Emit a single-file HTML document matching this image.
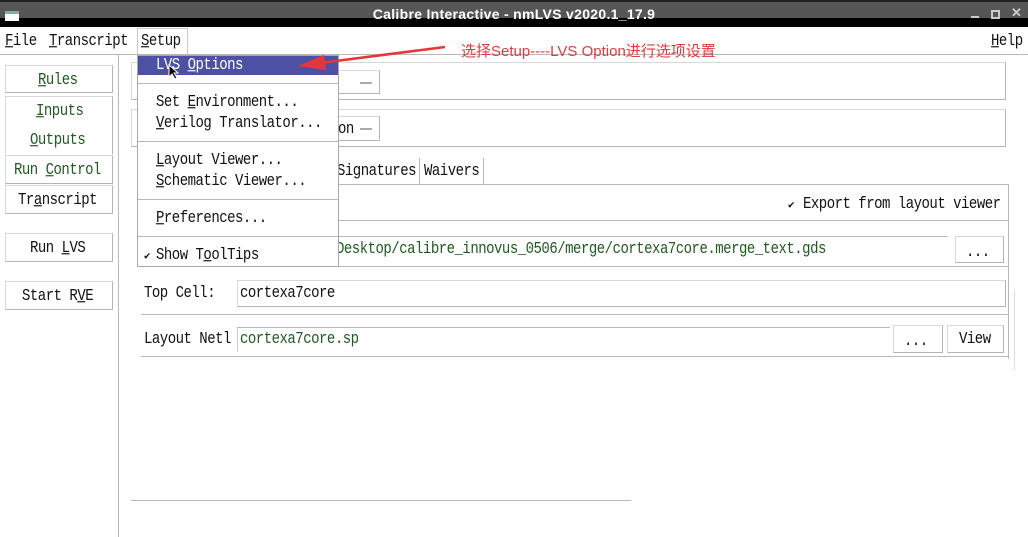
<!DOCTYPE html>
<html><head><meta charset="utf-8"><style>
*{margin:0;padding:0;box-sizing:border-box}
body{width:1028px;height:537px;overflow:hidden;background:#fff;position:relative;font-family:"Liberation Mono",monospace;font-size:14px;letter-spacing:-0.5px;color:#111}
.a{position:absolute;white-space:nowrap}
.t{line-height:16px;transform:scaleY(1.18);transform-origin:0 0}
.b{position:absolute;border:1px solid #b4b4b4;border-left-color:#d8d8d8;border-top-color:#d8d8d8}
.g{color:#1f5a1f}
u{text-decoration:underline}
.hl{position:absolute;height:1px;background:#b8b8b8}
.vl{position:absolute;width:1px;background:#b8b8b8}
</style></head><body>
<div class="a" style="left:0;top:0;width:1028px;height:18px;background:#565656"></div>
<div class="a" style="left:0;top:18px;width:1028px;height:9px;background:#000"></div>
<div class="a" style="left:0;top:0;width:1028px;height:2px;background:#222"></div>
<div class="a" style="left:5px;top:11px;width:14px;height:10px;background:#fff;border-top:3px solid #8aa"></div>
<div class="a" style="left:0;top:6px;width:1028px;text-align:center;color:#fff;font-family:'Liberation Sans',sans-serif;font-weight:bold;font-size:14px;letter-spacing:0.3px">Calibre Interactive - nmLVS v2020.1_17.9</div>
<div class="a" style="left:971px;top:16px;width:8px;height:2px;background:#ccc"></div>
<div class="a" style="left:991px;top:10px;width:9px;height:9px;border:2px solid #ccc"></div>
<div class="a" style="left:1011px;top:5px;color:#ccc;font-family:'Liberation Sans';font-weight:bold;font-size:13px">✕</div>
<div class="a t" style="left:5px;top:32px"><u>F</u>ile</div>
<div class="a t" style="left:49px;top:32px"><u>T</u>ranscript</div>
<div class="a" style="left:137px;top:28px;width:51px;height:27px;border:1px solid #c8c8c8;border-bottom:none"></div>
<div class="a t" style="left:141px;top:32px"><u>S</u>etup</div>
<div class="a t" style="left:991px;top:32px"><u>H</u>elp</div>
<div class="hl" style="left:0;top:54px;width:1028px"></div>
<div class="b" style="left:5px;top:65px;width:108px;height:28px"></div>
<div class="a t g" style="left:38px;top:71px"><u>R</u>ules</div>
<div class="b" style="left:5px;top:96px;width:108px;height:58px;border-bottom:none"></div>
<div class="a t g" style="left:36px;top:102px"><u>I</u>nputs</div>
<div class="a t g" style="left:30px;top:131px"><u>O</u>utputs</div>
<div class="b" style="left:5px;top:155px;width:108px;height:29px"></div>
<div class="a t g" style="left:14px;top:161px">Run <u>C</u>ontrol</div>
<div class="b" style="left:5px;top:185px;width:108px;height:29px"></div>
<div class="a t" style="left:18px;top:191px">Tr<u>a</u>nscript</div>
<div class="b" style="left:5px;top:233px;width:108px;height:29px"></div>
<div class="a t" style="left:30px;top:239px">Run <u>L</u>VS</div>
<div class="b" style="left:5px;top:281px;width:108px;height:29px"></div>
<div class="a t" style="left:22px;top:287px">Start R<u>V</u>E</div>
<div class="vl" style="left:118px;top:55px;height:482px"></div>
<div class="b" style="left:131px;top:62px;width:875px;height:38px"></div>
<div class="b" style="left:300px;top:70px;width:80px;height:24px"></div>
<div class="a" style="left:360px;top:82px;width:12px;height:2px;background:#aaa"></div>
<div class="b" style="left:131px;top:109px;width:875px;height:38px"></div>
<div class="b" style="left:300px;top:116px;width:80px;height:25px"></div>
<div class="a t" style="left:338px;top:120px">on</div>
<div class="a" style="left:360px;top:128px;width:12px;height:2px;background:#aaa"></div>
<div class="a t" style="left:337px;top:162px">Signatures</div>
<div class="vl" style="left:419px;top:158px;height:26px"></div>
<div class="a t" style="left:424px;top:162px">Waivers</div>
<div class="vl" style="left:483px;top:158px;height:26px"></div>
<div class="hl" style="left:338px;top:184px;width:670px"></div>
<div class="vl" style="left:1008px;top:184px;height:175px"></div>
<div class="a" style="left:788px;top:198px;font-size:11px">✔</div>
<div class="a t" style="left:803px;top:195px">Export from layout viewer</div>
<div class="hl" style="left:338px;top:220px;width:670px"></div>
<div class="hl" style="left:338px;top:236px;width:610px"></div>
<div class="a t g" style="left:336px;top:240px">Desktop/calibre_innovus_0506/merge/cortexa7core.merge_text.gds</div>
<div class="b" style="left:955px;top:236px;width:49px;height:27px"></div>
<div class="a t" style="left:966px;top:243px">...</div>
<div class="hl" style="left:141px;top:266px;width:867px"></div>
<div class="hl" style="left:141px;top:314px;width:867px"></div>
<div class="hl" style="left:141px;top:356px;width:867px"></div>
<div class="a t" style="left:144px;top:284px">Top Cell:</div>
<div class="b" style="left:237px;top:280px;width:769px;height:27px;border-bottom-color:#b4b4b4"></div>
<div class="a t" style="left:240px;top:284px">cortexa7core</div>
<div class="a t" style="left:144px;top:330px">Layout Netl</div>
<div class="vl" style="left:237px;top:327px;height:25px;background:#ccc"></div>
<div class="hl" style="left:237px;top:327px;width:653px"></div>
<div class="a t g" style="left:240px;top:330px">cortexa7core.sp</div>
<div class="b" style="left:893px;top:325px;width:50px;height:28px"></div>
<div class="a t" style="left:904px;top:332px">...</div>
<div class="b" style="left:947px;top:325px;width:57px;height:28px"></div>
<div class="a t" style="left:959px;top:330px">View</div>
<div class="hl" style="left:131px;top:500px;width:500px"></div>
<div class="vl" style="left:1014px;top:290px;height:80px;background:#ddd"></div>
<div class="a" style="left:137px;top:55px;width:202px;height:212px;background:#fff;border:1px solid #a8a8a8"></div>
<div class="a" style="left:138px;top:56px;width:200px;height:19px;background:#4e50a6"></div>
<div class="a t" style="left:156px;top:56px;color:#fff">LVS <u>O</u>ptions</div>
<div class="hl" style="left:138px;top:83px;width:200px"></div>
<div class="a t" style="left:156px;top:93px">Set <u>E</u>nvironment...</div>
<div class="a t" style="left:156px;top:114px"><u>V</u>erilog Translator...</div>
<div class="hl" style="left:138px;top:141px;width:200px"></div>
<div class="a t" style="left:156px;top:151px"><u>L</u>ayout Viewer...</div>
<div class="a t" style="left:156px;top:172px"><u>S</u>chematic Viewer...</div>
<div class="hl" style="left:138px;top:199px;width:200px"></div>
<div class="a t" style="left:156px;top:209px"><u>P</u>references...</div>
<div class="hl" style="left:138px;top:236px;width:200px"></div>
<div class="a" style="left:144px;top:249px;font-size:11px">✔</div>
<div class="a t" style="left:156px;top:246px">Show T<u>o</u>olTips</div>
<svg class="a" style="left:168px;top:64px" width="12" height="16"><path d="M1 1 L1 13 L4 10 L7 15 L9 14 L6 9 L10 9 Z" fill="#000" stroke="#fff" stroke-width="1"/></svg>
<svg class="a" style="left:290px;top:40px" width="170" height="35"><path d="M155 7 L30 23" stroke="#e8353a" stroke-width="2.5"/><path d="M8 26 L34 15 L36 30 Z" fill="#e8353a"/></svg>
<div class="a" style="left:461px;top:40px;color:#e03a3e;font-family:'Liberation Sans','Noto Sans CJK SC',sans-serif;font-size:15px;letter-spacing:0">选择Setup----LVS Option进行选项设置</div>
</body></html>
